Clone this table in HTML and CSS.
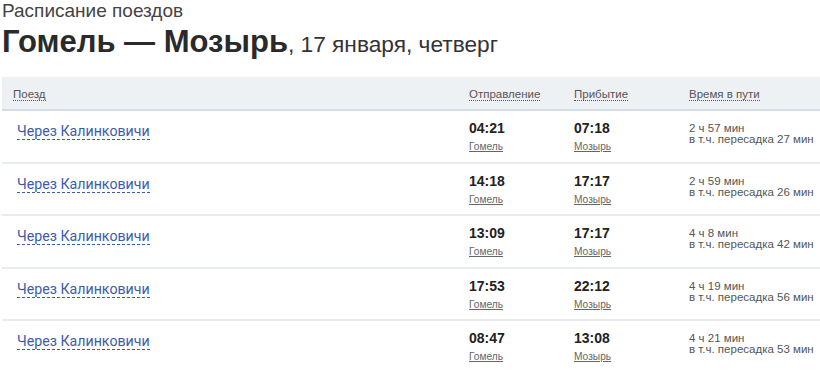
FILE: index.html
```html
<!DOCTYPE html>
<html lang="ru">
<head>
<meta charset="utf-8">
<title>Расписание поездов</title>
<link rel="stylesheet" href="styles.css">
</head>
<body>
<div class="page">
  <div class="kicker">Расписание поездов</div>
  <h1 class="title"><b>Гомель — Мозырь</b><span class="date">, 17 января, четверг</span></h1>
  <div class="table">
    <div class="row head">
      <div class="c1"><span class="th">Поезд</span></div>
      <div class="c2"><span class="th">Отправление</span></div>
      <div class="c3"><span class="th">Прибытие</span></div>
      <div class="c4"><span class="th">Время в пути</span></div>
    </div>
    <div class="row">
      <div class="c1"><a class="train">Через Калинковичи</a></div>
      <div class="c2"><div class="time">04:21</div><a class="st">Гомель</a></div>
      <div class="c3"><div class="time">07:18</div><a class="st">Мозырь</a></div>
      <div class="c4 dur">2 ч 57 мин<br>в т.ч. пересадка 27 мин</div>
    </div>
    <div class="row">
      <div class="c1"><a class="train">Через Калинковичи</a></div>
      <div class="c2"><div class="time">14:18</div><a class="st">Гомель</a></div>
      <div class="c3"><div class="time">17:17</div><a class="st">Мозырь</a></div>
      <div class="c4 dur">2 ч 59 мин<br>в т.ч. пересадка 26 мин</div>
    </div>
    <div class="row">
      <div class="c1"><a class="train">Через Калинковичи</a></div>
      <div class="c2"><div class="time">13:09</div><a class="st">Гомель</a></div>
      <div class="c3"><div class="time">17:17</div><a class="st">Мозырь</a></div>
      <div class="c4 dur">4 ч 8 мин<br>в т.ч. пересадка 42 мин</div>
    </div>
    <div class="row">
      <div class="c1"><a class="train">Через Калинковичи</a></div>
      <div class="c2"><div class="time">17:53</div><a class="st">Гомель</a></div>
      <div class="c3"><div class="time">22:12</div><a class="st">Мозырь</a></div>
      <div class="c4 dur">4 ч 19 мин<br>в т.ч. пересадка 56 мин</div>
    </div>
    <div class="row">
      <div class="c1"><a class="train">Через Калинковичи</a></div>
      <div class="c2"><div class="time">08:47</div><a class="st">Гомель</a></div>
      <div class="c3"><div class="time">13:08</div><a class="st">Мозырь</a></div>
      <div class="c4 dur">4 ч 21 мин<br>в т.ч. пересадка 53 мин</div>
    </div>
  </div>
</div>
</body>
</html>
```
FILE: styles.css
```css
html, body { margin: 0; padding: 0; background: #fff; }
body { font-family: "Liberation Sans", Arial, sans-serif; color: #333; overflow: hidden; }
.page { padding: 0 0 0 2px; width: 840px; }
.kicker { font-size: 19px; line-height: 22px; color: #444; margin-top: 0; }
.title { margin: 1px 0 0; font-size: 22.7px; font-weight: normal; line-height: 38px; height: 38px; color: #333; }
.title b { font-size: 31px; font-weight: bold; color: #2a2a2a; }
.date { color: #333; }
.table { margin-top: 16px; }
.row { display: grid; grid-template-columns: 467px 105px 115px 1fr; border-bottom: 2px solid #e8ebf0; height: 50.5px; box-sizing: content-box; }
.row.head { background: #edf1f4; height: 32px; border-bottom: 2px solid #d3dce6; align-items: center; }
.head > div { padding-top: 0; }
.th { font-size: 11.5px; color: #555; border-bottom: 1px dotted #555; line-height: 12px; }
.head .c1 { padding-left: 11px; }
.c1 { padding-left: 15px; }
.train { display: inline-block; margin-top: 12px; font-family: Roboto, "Liberation Sans", sans-serif; font-size: 14.2px; color: #3d5ca8; border-bottom: 1px dashed #3d5ca8; line-height: 16px; }
.c2, .c3 { padding-top: 9px; }
.time { font-size: 14px; font-weight: bold; color: #222; line-height: 16px; }
.st { display: inline-block; font-size: 10.2px; color: #666; text-decoration: underline; line-height: 14px; margin-top: 0; }
.dur { font-size: 11.5px; color: #555; line-height: 11px; padding-top: 12px; }
```
